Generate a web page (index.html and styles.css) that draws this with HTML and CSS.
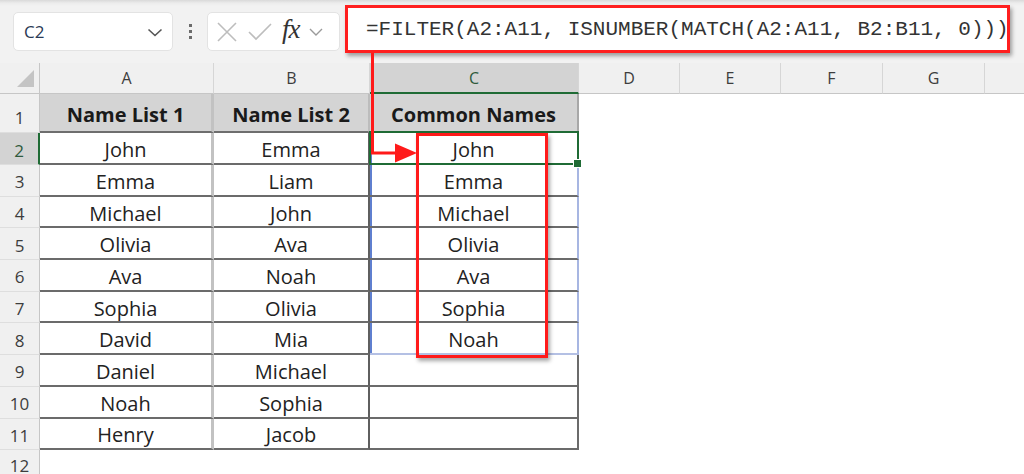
FILE: index.html
```html
<!DOCTYPE html>
<html>
<head>
<meta charset="utf-8">
<link rel="stylesheet" href="styles.css">
</head>
<body>
<div class="app">
  <div class="toolbar">
    <div class="namebox">
      <span class="nb-text">C2</span>
      <svg class="chev" width="16" height="9" viewBox="0 0 16 9"><path d="M1.5 1.5 L8 7.5 L14.5 1.5" fill="none" stroke="#555" stroke-width="1.6"/></svg>
    </div>
    <div class="vdots"><i></i><i></i><i></i></div>
    <div class="fxgroup">
      <svg width="22" height="22" viewBox="0 0 22 22"><path d="M2 2 L20 20 M20 2 L2 20" stroke="#bdbdbd" stroke-width="1.6" fill="none"/></svg>
      <svg width="26" height="20" viewBox="0 0 26 20"><path d="M2 10 L9 17 L24 2" stroke="#bdbdbd" stroke-width="1.6" fill="none"/></svg>
      <span class="fx">fx</span>
      <svg width="14" height="8" viewBox="0 0 14 8"><path d="M1 1 L7 7 L13 1" fill="none" stroke="#9a9a9a" stroke-width="1.4"/></svg>
    </div>
    <div class="formula">=FILTER(A2:A11, ISNUMBER(MATCH(A2:A11, B2:B11, 0)))</div>
  </div>

  <div class="sheet">
    <div class="corner"><span class="tri"></span></div>
    <div class="ch">A</div><div class="ch">B</div><div class="ch sel">C</div><div class="ch">D</div><div class="ch">E</div><div class="ch">F</div><div class="ch">G</div><div class="ch last"></div>

    <div class="rh r1">1</div>
    <div class="hd ca">Name List 1</div><div class="hd cb">Name List 2</div><div class="hd cc">Common Names</div><div class="e"></div><div class="e"></div><div class="e"></div><div class="e"></div><div class="e"></div>

    <div class="rh sel">2</div>
    <div class="t ca">John</div><div class="t cb">Emma</div><div class="t cc sp active">John</div><div class="e"></div><div class="e"></div><div class="e"></div><div class="e"></div><div class="e"></div>

    <div class="rh">3</div>
    <div class="t ca">Emma</div><div class="t cb">Liam</div><div class="t cc sp">Emma</div><div class="e"></div><div class="e"></div><div class="e"></div><div class="e"></div><div class="e"></div>

    <div class="rh">4</div>
    <div class="t ca">Michael</div><div class="t cb">John</div><div class="t cc sp">Michael</div><div class="e"></div><div class="e"></div><div class="e"></div><div class="e"></div><div class="e"></div>

    <div class="rh">5</div>
    <div class="t ca">Olivia</div><div class="t cb">Ava</div><div class="t cc sp">Olivia</div><div class="e"></div><div class="e"></div><div class="e"></div><div class="e"></div><div class="e"></div>

    <div class="rh">6</div>
    <div class="t ca">Ava</div><div class="t cb">Noah</div><div class="t cc sp">Ava</div><div class="e"></div><div class="e"></div><div class="e"></div><div class="e"></div><div class="e"></div>

    <div class="rh">7</div>
    <div class="t ca">Sophia</div><div class="t cb">Olivia</div><div class="t cc sp">Sophia</div><div class="e"></div><div class="e"></div><div class="e"></div><div class="e"></div><div class="e"></div>

    <div class="rh">8</div>
    <div class="t ca">David</div><div class="t cb">Mia</div><div class="t cc sp splast">Noah</div><div class="e"></div><div class="e"></div><div class="e"></div><div class="e"></div><div class="e"></div>

    <div class="rh">9</div>
    <div class="t ca">Daniel</div><div class="t cb">Michael</div><div class="t cc"></div><div class="e"></div><div class="e"></div><div class="e"></div><div class="e"></div><div class="e"></div>

    <div class="rh">10</div>
    <div class="t ca">Noah</div><div class="t cb">Sophia</div><div class="t cc"></div><div class="e"></div><div class="e"></div><div class="e"></div><div class="e"></div><div class="e"></div>

    <div class="rh">11</div>
    <div class="t ca">Henry</div><div class="t cb">Jacob</div><div class="t cc"></div><div class="e"></div><div class="e"></div><div class="e"></div><div class="e"></div><div class="e"></div>

    <div class="rh r12">12</div>
    <div class="e"></div><div class="e"></div><div class="e"></div><div class="e"></div><div class="e"></div><div class="e"></div><div class="e"></div><div class="e"></div>
  </div>

  <div class="redbox"></div>
  <svg class="arrow" width="1024" height="474" viewBox="0 0 1024 474">
    <path d="M372.5 53 L372.5 153 L398 153" fill="none" stroke="#ff1a1a" stroke-width="3"/>
    <path d="M395 143.5 L417 153 L395 162.5 Z" fill="#ff1a1a"/>
  </svg>
</div>
</body>
</html>
```

FILE: styles.css
```css
* { box-sizing: border-box; }
html, body { margin: 0; padding: 0; }
body {
  width: 1024px;
  height: 474px;
  overflow: hidden;
  background: #ffffff;
  font-family: "Open Sans", "Liberation Sans", sans-serif;
}
.app { position: relative; width: 1024px; height: 474px; }

.toolbar {
  height: 63px;
  background: linear-gradient(#d9d9d9 0, #ececec 3px, #f2f2f2 6px, #f2f2f2 100%);
  display: flex;
  align-items: flex-start;
  padding: 12px 0 0 13px;
}
.namebox {
  width: 160px;
  height: 39px;
  background: #fff;
  border: 1px solid #e3e3e3;
  border-radius: 5px;
  display: flex;
  align-items: center;
  justify-content: space-between;
  padding: 0 9px 0 10px;
}
.nb-text { font-size: 17px; color: #2b3a55; font-family: "Open Sans", sans-serif; }
.chev { margin-top: 2px; }
.vdots {
  width: 34px;
  height: 39px;
  display: flex;
  flex-direction: column;
  align-items: center;
  justify-content: center;
  gap: 3px;
}
.vdots i { display: block; width: 3px; height: 3px; background: #6b6b6b; }
.fxgroup {
  width: 133px;
  height: 39px;
  background: #fff;
  border: 1px solid #e3e3e3;
  border-radius: 5px;
  display: flex;
  align-items: center;
  padding: 0 4px 0 8px;
  gap: 9px;
}
.fx {
  font-family: "Liberation Serif", serif;
  font-style: italic;
  font-size: 27px;
  color: #333;
  letter-spacing: -1px;
  margin-top: -4px;
}
.formula {
  margin: -7px 0 0 5px;
  width: 665px;
  height: 48px;
  background: #fff;
  border: 3px solid #ff1f1f;
  box-shadow: 2px 3px 4px rgba(0,0,0,0.35);
  font-family: "Liberation Mono", monospace;
  font-size: 21px;
  color: #333;
  display: flex;
  align-items: center;
  padding-left: 18px;
  white-space: nowrap;
  overflow: hidden;
}

.sheet {
  display: grid;
  grid-template-columns: 40px 174px 156px 209px 101px 101px 102px 102px 39px;
  grid-template-rows: 31px 39px 32px repeat(9, 31.7px) 30px;
}
.sheet > div {
  display: flex;
  align-items: center;
  justify-content: center;
  color: #222;
  font-size: 20px;
}
.corner {
  background: #f0f0f0;
  border-right: 1px solid #c6c6c6;
  border-bottom: 1px solid #c6c6c6;
  position: relative;
}
.tri {
  position: absolute;
  right: 5px;
  bottom: 6px;
  width: 0; height: 0;
  border-left: 17px solid transparent;
  border-bottom: 17px solid #c4c4c4;
}
.sheet > .ch {
  background: #f0f0f0;
  border-right: 1px solid #d6d6d6;
  border-bottom: 1px solid #c6c6c6;
  font-size: 16px;
  color: #3d3d3d;
}
.sheet > .ch.sel {
  background: #d3d3d3;
  border-bottom: 2px solid #1f6b35;
  color: #2f5a3c;
}
.sheet > .ch.last { border-right: none; }
.sheet > .rh {
  background: #f0f0f0;
  border-right: 1px solid #c6c6c6;
  border-bottom: 1px solid #dedede;
  font-size: 17px;
  color: #3d3d3d;
  padding-top: 3px;
}
.sheet > .rh.r1 { align-items: flex-end; padding-bottom: 3px; }
.sheet > .rh.r12 { align-items: flex-start; padding-top: 4px; }
.sheet > .rh.sel {
  background: #d3d3d3;
  border-right: 2px solid #1f6b35;
  color: #2f5a3c;
}
.sheet > .hd {
  background: #d4d4d4;
  font-weight: 700;
  color: #1a1a1a;
  border-bottom: 2px solid #6e6e6e;
  padding-top: 3px;
}
.sheet > .t {
  background: #fff;
  border-bottom: 2px solid #6b6b6b;
  padding-top: 3px;
}
.sheet > .ca { border-right: 3px solid #c2c2c2; }
.sheet > .cb { border-right: 2px solid #5f5f5f; }
.sheet > .hd.cb { border-right: 2px solid #bcbcbc; }
.sheet > .cc { border-right: 2px solid #6b6b6b; }
.sheet > .hd.cc { border-right: 2px solid #a8a8a8; }
.sheet > .sp {
  border-right: 2px solid #a7b6e2;
  box-shadow: inset 2px 0 0 #5f7fcf;
}
.sheet > .sp.splast { border-bottom: 2px solid #b4c0e4; }
.sheet > .active {
  position: relative;
}
.sheet > .active::after {
  content: "";
  position: absolute;
  left: -1px; top: -2px; right: -2px; bottom: -2px;
  border: 2px solid #1f6b35;
}
.sheet > .active::before {
  content: "";
  position: absolute;
  right: -5px; bottom: -5px;
  width: 7px; height: 7px;
  background: #1f6b35;
  border: 1px solid #fff;
  z-index: 2;
}
.sheet > .e { background: #fff; }

.redbox {
  position: absolute;
  left: 416px;
  top: 133px;
  width: 132px;
  height: 225px;
  border: 3px solid #ff1a1a;
  box-shadow: 2px 3px 4px rgba(0,0,0,0.35);
}
.arrow {
  position: absolute;
  left: 0; top: 0;
  pointer-events: none;
}
```
